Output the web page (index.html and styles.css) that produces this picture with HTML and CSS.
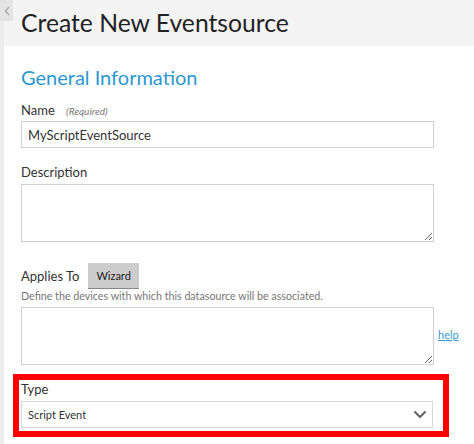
FILE: index.html
```html
<!DOCTYPE html>
<html>
<head>
<meta charset="utf-8">
<link rel="stylesheet" href="styles.css">
</head>
<body>
<div class="page">
  <div class="side"><div class="side-tab"><svg width="6" height="10" viewBox="0 0 6 10"><path d="M5 1 L1.5 5 L5 9" fill="none" stroke="#aaa" stroke-width="1.4"/></svg></div></div>
  <div class="main">
    <div class="header"><h1 class="title">Create New Eventsource</h1></div>
    <div class="content">
      <h2 class="section">General Information</h2>
      <div class="field name-field">
        <div class="label">Name <span class="req">(Required)</span></div>
        <input class="input" type="text" value="MyScriptEventSource">
      </div>
      <div class="field desc-field">
        <div class="label">Description</div>
        <textarea class="area"></textarea>
      </div>
      <div class="field applies-field">
        <div class="label-row"><span class="label">Applies To</span><span class="wizard">Wizard</span></div>
        <div class="hint">Define the devices with which this datasource will be associated.</div>
        <div class="area-row"><textarea class="area"></textarea><a class="help" href="#">help</a></div>
      </div>
      <div class="highlight">
        <div class="label">Type</div>
        <div class="select"><span>Script Event</span>
          <svg class="chev" width="14" height="9" viewBox="0 0 14 9"><path d="M1.5 1.5 L7 7 L12.5 1.5" fill="none" stroke="#666" stroke-width="2.2"/></svg>
        </div>
      </div>
    </div>
  </div>
</div>
</body>
</html>
```

FILE: styles.css
```css
html, body { margin: 0; padding: 0; background: #fff; }
body { font-family: Lato, "Open Sans", sans-serif; color: #333; }
.page { display: flex; min-height: 444px; }
.side { width: 4px; background: #ececec; position: relative; }
.side-tab { position: absolute; left: 0; top: 0; width: 13px; height: 21px; background: #e4e4e4; display: flex; align-items: center; justify-content: center; }
.side-tab svg { display: block; }
.main { flex: 1; }
.header { background: #f4f4f4; height: 46px; padding-left: 17px; }
.title { margin: 0; font-weight: 400; font-size: 24.7px; color: #222; line-height: 46px; }
.content { padding-left: 17px; }
.section { margin: 19px 0 0; font-weight: 400; font-size: 20px; color: #2b98d0; line-height: 24px; padding-bottom: 5px; }
.name-field { margin-top: 8px; }
.label { font-size: 13px; color: #333; line-height: 17px; }
.req { font-size: 10px; font-style: italic; color: #777; margin-left: 8px; }
.input { display: block; box-sizing: border-box; width: 413px; height: 27px; margin-top: 1px; border: 1px solid #d0d0d0; padding: 0 6px; font-family: inherit; font-size: 13px; color: #333; outline: none; }
.desc-field { margin-top: 16px; }
.area { display: block; box-sizing: border-box; width: 413px; height: 58px; margin: 3px 0 0; border: 1px solid #d0d0d0; font-family: inherit; }
.applies-field { margin-top: 21px; }
.label-row { display: flex; align-items: center; }
.wizard { margin-left: 9px; background: #cdcdcd; border-bottom: 1px solid #888; font-size: 11px; color: #222; padding: 0 8px; line-height: 25px; }
.hint { font-size: 10.7px; color: #777; margin-top: 0; line-height: 14px; }
.area-row { display: flex; align-items: center; }
.area-row .area { margin-top: 4px; }
.help { font-size: 11px; color: #3a9bd0; margin-left: 4px; }
.highlight { margin: 9px 0 0 -8px; width: 418px; border: 6px solid #f00; padding: 1px 4px 3px 2px; }
.select { box-sizing: border-box; width: 412px; height: 27px; margin-top: 3px; border: 1px solid #d8d8d8; display: flex; align-items: center; justify-content: space-between; padding: 0 5px 0 6px; font-size: 11px; color: #333; }
.chev { display: block; }
```
